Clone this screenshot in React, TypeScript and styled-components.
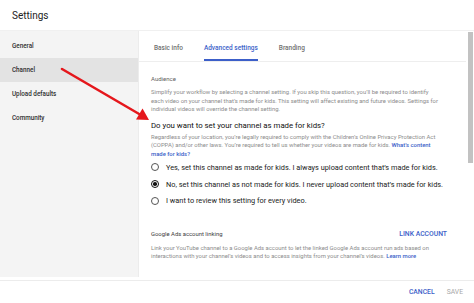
import React from "react";
import styled, { createGlobalStyle } from "styled-components";

const GlobalStyle = createGlobalStyle`
    html, body {
        margin: 0;
        padding: 0;
        background: #ffffff;
    }
    body {
        font-family: Roboto, "Noto Sans", "Liberation Sans", sans-serif;
        -webkit-font-smoothing: antialiased;
    }
`;

const navItems = ["General", "Channel", "Upload defaults", "Community"];
const tabs = ["Basic info", "Advanced settings", "Branding"];
const radioOptions = [
    "Yes, set this channel as made for kids. I always upload content that’s made for kids.",
    "No, set this channel as not made for kids. I never upload content that’s made for kids.",
    "I want to review this setting for every video.",
];

export default function App() {
    return (
        <>
            <GlobalStyle />
            <Page>
                <Header>Settings</Header>
                <Body>
                    <Sidebar>
                        {navItems.map((item) => (
                            <NavItem key={item} active={item === "Channel"}>
                                {item}
                            </NavItem>
                        ))}
                    </Sidebar>
                    <Card>
                        <Tabs>
                            {tabs.map((tab) => (
                                <Tab key={tab} active={tab === "Advanced settings"}>
                                    {tab}
                                </Tab>
                            ))}
                        </Tabs>
                        <Content>
                            <Label>Audience</Label>
                            <Paragraph>
                                Simplify your workflow by selecting a channel setting. If you skip
                                this question, you’ll be required to identify each video on your
                                channel that’s made for kids. This setting will affect existing and
                                future videos. Settings for individual videos will override the
                                channel setting.
                            </Paragraph>
                            <Question>Do you want to set your channel as made for kids?</Question>
                            <Paragraph tight>
                                Regardless of your location, you’re legally required to comply with
                                the Children’s Online Privacy Protection Act (COPPA) and/or other
                                laws. You’re required to tell us whether your videos are made for
                                kids. <Link>What’s content made for kids?</Link>
                            </Paragraph>
                            <RadioList>
                                {radioOptions.map((option, i) => (
                                    <RadioRow key={option}>
                                        <Radio checked={i === 1} />
                                        <RadioText>{option}</RadioText>
                                    </RadioRow>
                                ))}
                            </RadioList>
                            <SectionHead>
                                <SectionTitle>Google Ads account linking</SectionTitle>
                                <TextButton>LINK ACCOUNT</TextButton>
                            </SectionHead>
                            <Paragraph small>
                                Link your YouTube channel to a Google Ads account to let the linked
                                Google Ads account run ads based on interactions with your channel’s
                                videos and to access insights from your channel’s videos.{" "}
                                <Link>Learn more</Link>
                            </Paragraph>
                        </Content>
                    </Card>
                    <ScrollTrack>
                        <ScrollThumb />
                    </ScrollTrack>
                </Body>
                <Footer>
                    <TextButton>CANCEL</TextButton>
                    <TextButton disabled>SAVE</TextButton>
                </Footer>
                <Arrow viewBox="0 0 474 303">
                    <line
                        x1="62"
                        y1="69"
                        x2="140"
                        y2="114.5"
                        stroke="#e5171c"
                        strokeWidth="2.6"
                        strokeLinecap="round"
                    />
                    <polygon points="149,120 136,119.5 142.5,108.5" fill="#e5171c" />
                </Arrow>
            </Page>
        </>
    );
}

const Page = styled.div`
    position: relative;
    width: 474px;
    height: 303px;
    overflow: hidden;
    display: flex;
    flex-direction: column;
    color: #202020;
`;

const Header = styled.div`
    height: 30px;
    padding-left: 12px;
    display: flex;
    align-items: center;
    font-size: 10px;
    color: #222;
    border-bottom: 1px solid #f0f0f0;
`;

const Body = styled.div`
    display: flex;
    height: 246px;
`;

const Sidebar = styled.div`
    width: 138px;
    padding-top: 3px;
    background: #f4f4f4;
`;

const NavItem = styled.div<{ active?: boolean }>`
    height: 24px;
    padding-left: 12px;
    display: flex;
    align-items: center;
    font-size: 6.3px;
    font-weight: 500;
    color: #303030;
    background: ${(props) => (props.active ? "#e3e3e3" : "transparent")};
`;

const Card = styled.div`
    flex: 1;
    display: flex;
    flex-direction: column;
    background: #fff;
    border-left: 1px solid #ececec;
`;

const Tabs = styled.div`
    height: 30px;
    padding-left: 15px;
    display: flex;
    gap: 21px;
    border-bottom: 1px solid #eeeeee;
`;

const Tab = styled.div<{ active?: boolean }>`
    display: flex;
    align-items: center;
    padding-top: 6px;
    box-sizing: border-box;
    height: 100%;
    font-size: 6.5px;
    font-weight: 500;
    color: ${(props) => (props.active ? "#3c5fc9" : "#707070")};
    border-bottom: 2px solid ${(props) => (props.active ? "#3c5fc9" : "transparent")};
`;

const Content = styled.div`
    padding: 13px 12px 0 12px;
    display: flex;
    flex-direction: column;
`;

const Label = styled.div`
    font-size: 6px;
    line-height: 8px;
    color: #606060;
`;

const Paragraph = styled.p<{ tight?: boolean; small?: boolean }>`
    margin: ${(props) => (props.tight ? "2px 0 0" : props.small ? "6px 0 0" : "5px 0 0")};
    font-size: 5.9px;
    line-height: ${(props) => (props.small ? "8.3px" : "8.5px")};
    color: #8c8c8c;
    padding-right: 12px;
`;

const Link = styled.span`
    color: #3c5fc9;
    font-weight: 500;
`;

const Question = styled.div`
    margin-top: 7px;
    font-size: 7.8px;
    line-height: 10px;
    color: #111;
`;

const RadioList = styled.div`
    margin-top: 1px;
    display: flex;
    flex-direction: column;
`;

const RadioRow = styled.div`
    height: 16.7px;
    display: flex;
    align-items: center;
    gap: 7px;
`;

const Radio = styled.span<{ checked?: boolean }>`
    flex-shrink: 0;
    width: 8px;
    height: 8px;
    box-sizing: border-box;
    border-radius: 50%;
    border: ${(props) => (props.checked ? "1.3px solid #111" : "1px solid #555")};
    display: flex;
    align-items: center;
    justify-content: center;
    &::after {
        content: "";
        width: 3.6px;
        height: 3.6px;
        border-radius: 50%;
        background: ${(props) => (props.checked ? "#111" : "transparent")};
    }
`;

const RadioText = styled.span`
    font-size: 7.35px;
    color: #222;
    white-space: nowrap;
`;

const SectionHead = styled.div`
    margin-top: 20px;
    height: 9px;
    display: flex;
    align-items: center;
    justify-content: space-between;
    padding-right: 7px;
`;

const SectionTitle = styled.div`
    font-size: 5.9px;
    color: #404040;
`;

const TextButton = styled.span<{ disabled?: boolean }>`
    font-size: 6.8px;
    color: ${(props) => (props.disabled ? "#a8a8a8" : "#3c5fc9")};
    font-weight: ${(props) => (props.disabled ? 400 : 500)};
`;

const ScrollTrack = styled.div`
    width: 8px;
    padding-top: 1px;
    display: flex;
    justify-content: center;
    background: #fff;
`;

const ScrollThumb = styled.div`
    width: 5px;
    height: 131px;
    background: #c2c2c2;
`;

const Footer = styled.div`
    margin-top: 3px;
    flex: 1;
    display: flex;
    align-items: center;
    justify-content: flex-end;
    gap: 12px;
    padding-right: 11px;
    border-top: 1px solid #ececec;
`;

const Arrow = styled.svg`
    position: absolute;
    inset: 0;
    width: 474px;
    height: 303px;
    pointer-events: none;
`;
